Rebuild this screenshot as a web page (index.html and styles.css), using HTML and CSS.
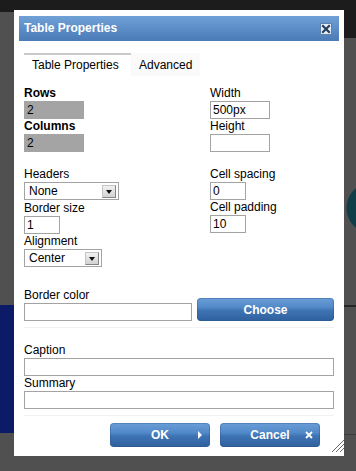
FILE: index.html
```html
<!DOCTYPE html>
<html>
<head>
<meta charset="utf-8">
<title>Table Properties</title>
<link rel="stylesheet" href="styles.css">
</head>
<body>
<div class="dialog">
  <div class="titlebar">
    <span class="title">Table Properties</span>
    <span class="close">
      <svg width="12" height="12" viewBox="0 0 12 12"><rect x="0.5" y="0.5" width="11" height="11" fill="#e6ecf3" stroke="#5f82aa"/><path d="M3 3 L9 9 M9 3 L3 9" stroke="#24405f" stroke-width="2.2" stroke-linecap="square"/></svg>
    </span>
  </div>
  <div class="tabs">
    <span class="tab tab-active">Table Properties</span>
    <span class="tab tab-idle">Advanced</span>
  </div>
  <div class="panel">
    <div class="cols">
      <div class="col">
        <div class="lbl bold">Rows</div>
        <div class="inp inp-gray w60">2</div>
        <div class="lbl bold">Columns</div>
        <div class="inp inp-gray w60">2</div>
        <div class="lbl gap">Headers</div>
        <div class="sel w95">None<span class="arrow"></span></div>
        <div class="lbl nudge">Border size</div>
        <div class="inp w36">1</div>
        <div class="lbl">Alignment</div>
        <div class="sel w78">Center<span class="arrow"></span></div>
      </div>
      <div class="col">
        <div class="lbl">Width</div>
        <div class="inp w60">500px</div>
        <div class="lbl">Height</div>
        <div class="inp w60"></div>
        <div class="lbl gap">Cell spacing</div>
        <div class="inp w36">0</div>
        <div class="lbl">Cell padding</div>
        <div class="inp w36">10</div>
      </div>
    </div>
    <div class="color-row">
      <div class="color-field">
        <div class="lbl">Border color</div>
        <div class="inp w168"></div>
      </div>
      <button class="btn btn-choose">Choose</button>
    </div>
    <div class="sep"></div>
    <div class="lbl caption">Caption</div>
    <div class="inp full"></div>
    <div class="lbl">Summary</div>
    <div class="inp full"></div>
    <div class="sep"></div>
  </div>
  <div class="footer">
    <button class="btn btn-act">OK<svg class="btn-icon" width="6" height="8" viewBox="0 0 6 8"><path d="M1 0 L5 4 L1 8 Z" fill="#fff"/></svg></button>
    <button class="btn btn-act">Cancel<svg class="btn-icon" width="8" height="8" viewBox="0 0 8 8"><path d="M1 1 L7 7 M7 1 L1 7" stroke="#fff" stroke-width="1.8"/></svg></button>
  </div>
  <svg class="grip" width="12" height="12" viewBox="0 0 12 12"><path d="M0 12 L12 0 M4 12 L12 4 M8 12 L12 8" stroke="#6a6a6a" stroke-width="1"/></svg>
</div>
</body>
</html>
```
FILE: styles.css
```css
html, body {
  margin: 0;
  padding: 0;
}
body {
  width: 356px;
  height: 471px;
  overflow: hidden;
  position: relative;
  font-family: "Liberation Sans", Arial, sans-serif;
  font-size: 12px;
  color: #000;
  background:
    radial-gradient(circle at 372px 208px, #0f3d48 0, #0f3d48 25px, transparent 26px),
    linear-gradient(#0b1b68, #0b1b68) 0 305px / 14px 128px no-repeat,
    linear-gradient(#1c1c1c, #1c1c1c) 344px 0 / 12px 38px no-repeat,
    linear-gradient(#1c1c1c, #1c1c1c) 0 0 / 356px 12px no-repeat,
    linear-gradient(#262626, #262626) 344px 305px / 12px 2px no-repeat,
    linear-gradient(#3a3a3a, #3a3a3a) 344px 434px / 12px 1px no-repeat,
    #505050;
}
.dialog {
  position: absolute;
  left: 14px;
  top: 10px;
  width: 330px;
  height: 446px;
  background: #fff;
  display: flex;
  flex-direction: column;
}
.titlebar {
  margin: 6px 5px 0;
  height: 25px;
  padding: 0 7px 0 5px;
  background: linear-gradient(#6fa0d6, #4a7bb7);
  display: flex;
  align-items: center;
  justify-content: space-between;
  color: #fff;
  font-weight: bold;
  font-size: 12px;
  line-height: 25px;
}
.close {
  display: flex;
  width: 12px;
  height: 12px;
}
.tabs {
  margin: 12px 10px 0;
  display: flex;
  height: 23px;
}
.tab {
  line-height: 14px;
  padding: 5px 8px 0;
  color: #000;
}
.tab-active {
  width: 107px;
  box-sizing: border-box;
  border-top: 2px solid #c9c9c9;
  padding-top: 3px;
}
.tab-idle {
  background: #fafafa;
}
.panel {
  padding: 0 10px;
  display: flex;
  flex-direction: column;
}
.cols {
  margin-top: 10px;
  display: grid;
  grid-template-columns: 186px 1fr;
}
.col {
  display: flex;
  flex-direction: column;
  align-items: flex-start;
}
.lbl {
  line-height: 15px;
  height: 15px;
  white-space: nowrap;
}
.bold {
  font-weight: bold;
}
.gap {
  margin-top: 15px;
}
.nudge {
  margin-top: 1px;
}
.inp {
  box-sizing: border-box;
  height: 18px;
  border: 1px solid #a3a3a3;
  background: #fff;
  padding: 0 2px;
  line-height: 16px;
}
.inp-gray {
  background: #a4a4a4;
  border-color: #a4a4a4;
}
.w36 { width: 36px; }
.w60 { width: 60px; }
.w168 { width: 168px; }
.w78 { width: 78px; }
.w95 { width: 95px; }
.full { width: 310px; }
.sel {
  position: relative;
  box-sizing: border-box;
  height: 18px;
  border: 1px solid #a3a3a3;
  background: #fff;
  padding: 0 4px;
  line-height: 16px;
}
.arrow {
  position: absolute;
  right: 2px;
  top: 2px;
  width: 14px;
  height: 13px;
  box-sizing: border-box;
  border: 1px solid #c4c4c4;
  border-right-color: #858585;
  border-bottom-color: #858585;
  background: linear-gradient(#f2f2f2, #d2d2d2);
}
.arrow::after {
  content: "";
  position: absolute;
  left: 3px;
  top: 4px;
  border-left: 3.5px solid transparent;
  border-right: 3.5px solid transparent;
  border-top: 4px solid #111;
}
.color-row {
  margin-top: 21px;
  display: flex;
  align-items: flex-end;
  gap: 5px;
}
.color-field {
  display: flex;
  flex-direction: column;
}
.btn {
  position: relative;
  border: none;
  border-radius: 4px;
  color: #fff;
  font-family: "Liberation Sans", Arial, sans-serif;
  font-weight: bold;
  font-size: 12px;
  padding: 0;
  background: linear-gradient(#6a9ed7 0%, #5289c8 40%, #3e73b3 55%, #2f609e 100%);
  box-shadow: inset 0 0 0 1px rgba(40, 80, 130, 0.35);
}
.btn-choose {
  width: 137px;
  height: 23px;
}
.sep {
  margin-top: 6px;
  height: 1px;
  background: #f2f2f2;
}
.caption {
  margin-top: 15px;
}
.footer {
  margin-top: 7px;
  padding-left: 96px;
  display: flex;
  gap: 10px;
}
.btn-act {
  width: 100px;
  height: 24px;
}
.btn-icon {
  position: absolute;
  right: 7px;
  top: 8px;
}
.grip {
  position: absolute;
  right: 0;
  bottom: 4px;
}
```
